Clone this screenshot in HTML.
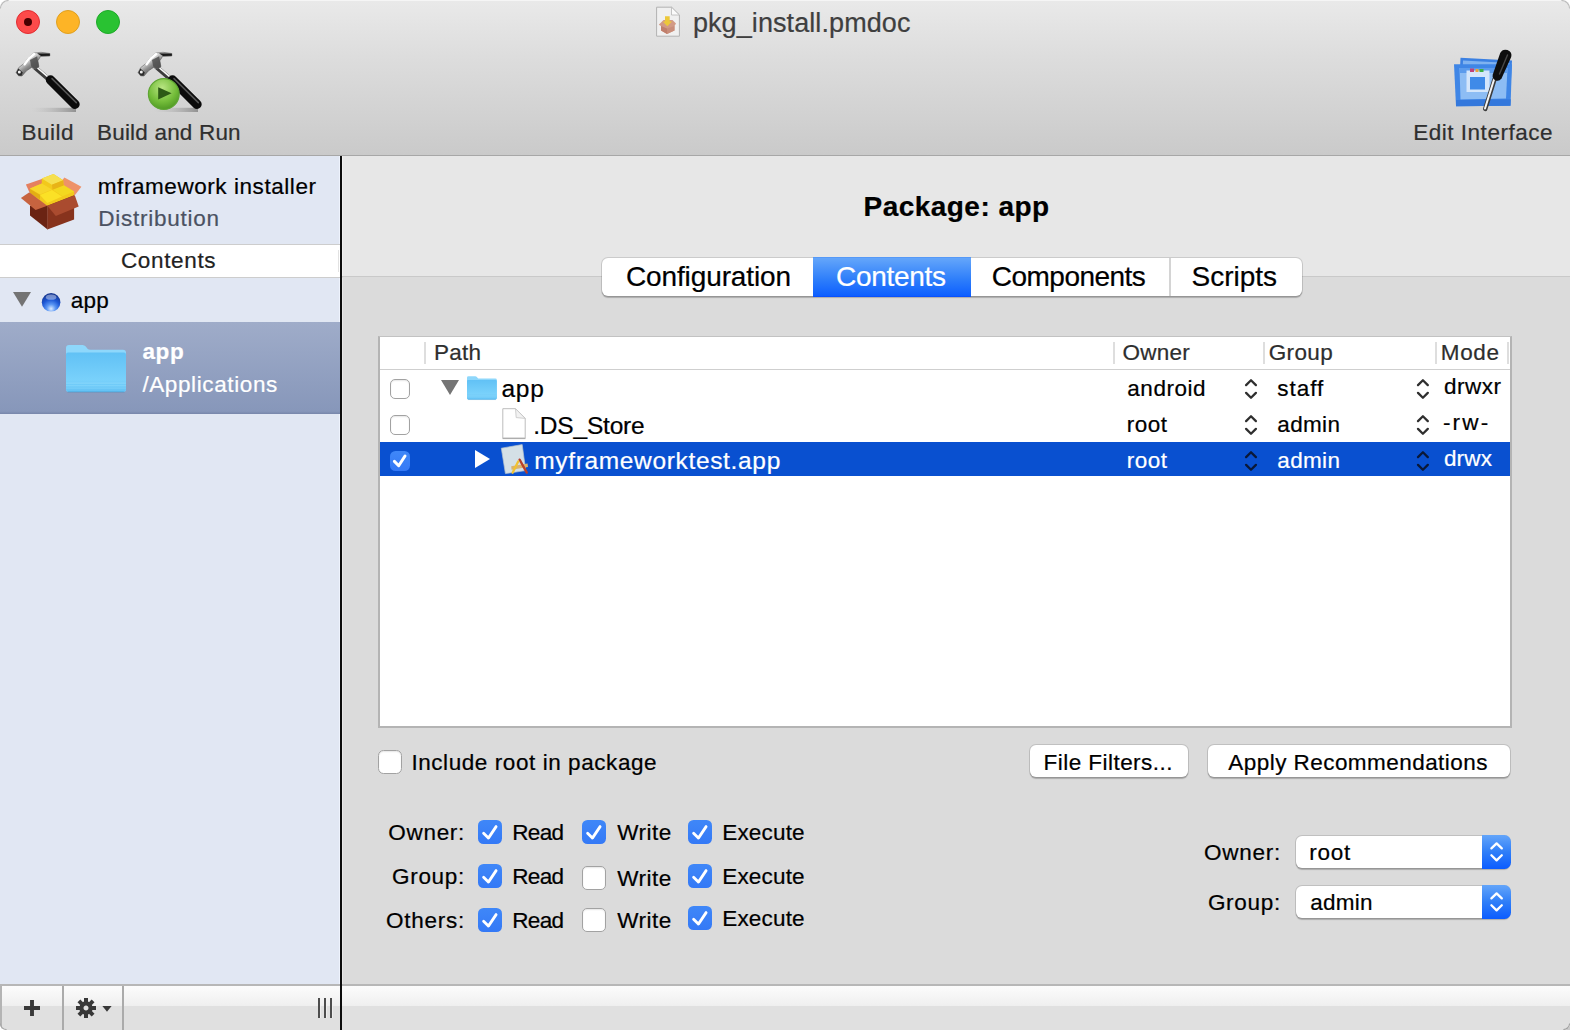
<!DOCTYPE html>
<html><head><meta charset="utf-8"><title>pkg_install.pmdoc</title>
<style>
*{box-sizing:border-box;margin:0;padding:0}
html,body{width:1570px;height:1030px;overflow:hidden;background:#fff}
body{font-family:"Liberation Sans",sans-serif;color:#000;position:relative}
.a{position:absolute}
.t{position:absolute;white-space:nowrap;line-height:1;-webkit-text-stroke:.22px}
#win{position:absolute;left:0;top:0;width:1570px;height:1030px;border-radius:8px 8px 6px 6px;overflow:hidden;background:#dcdcdc}
#toolbar{position:absolute;left:0;top:0;width:1570px;height:156px;background:linear-gradient(#e9e9e9 0,#dcdcdc 60px,#cacaca 154px);border-bottom:1px solid #a7a7a7;border-top:1px solid #f5f5f5}
.tl{position:absolute;top:10px;width:24px;height:24px;border-radius:50%}
#sidebar{position:absolute;left:0;top:156px;width:340px;height:829px;background:#e1e7f3}
#divider{position:absolute;left:340px;top:156px;width:2px;height:874px;background:#0c0c0c}
#main{position:absolute;left:342px;top:156px;width:1228px;height:829px;background:#dbdbdb}
#maintop{position:absolute;left:342px;top:156px;width:1228px;height:121px;background:#e7e7e7;border-bottom:1px solid #c9c9c9}
.cb{position:absolute;border-radius:5px;background:#fff;border:1px solid #a2a2a2;box-shadow:inset 0 1px 1.5px rgba(0,0,0,.1)}
.cbk{position:absolute;border-radius:5.5px;background:linear-gradient(#3f87f8,#3479f6);}
.btn{position:absolute;background:#fff;border-radius:6px;box-shadow:0 0 0 1px rgba(0,0,0,.12),0 1.5px 1px rgba(0,0,0,.22)}
.bbar{position:absolute;top:984px;height:46px;background:linear-gradient(#fcfcfc 0,#efefef 20px,#e0e0e0 20.5px,#e0e0e0 44px);border-top:2px solid #b7b7b7}
.sep{position:absolute;width:2px;background:#dedede;top:342px;height:22px}
</style></head><body>
<div class="a" style="left:1560px;top:1020px;width:10px;height:10px;background:#c8c8c8"></div>
<div id="win">
<div id="toolbar"></div>
<div class="tl" style="left:16px;background:#fc4a4a;border:1px solid #e22c31"></div>
<div class="tl" style="left:56px;background:#fdb426;border:1px solid #e0a01f"></div>
<div class="tl" style="left:96px;background:#29c232;border:1px solid #1eaa29"></div>
<div class="a" style="left:24px;top:18px;width:8px;height:8px;border-radius:50%;background:#470001"></div>

<div id="sidebar"></div>
<div class="a" style="left:339px;top:156px;width:1px;height:828px;background:#eef3fd"></div>
<div class="a" style="left:0;top:244px;width:340px;height:34px;background:#fff;border-top:1px solid #cdcdcd;border-bottom:1px solid #cdcdcd"></div>
<div class="a" id="sel" style="left:0;top:322px;width:340px;height:92px;background:linear-gradient(#9facc9 0,#8797ba 97%,#7786aa 100%)"></div>
<div class="a" style="left:338px;top:250px;width:1px;height:22px;background:#e2e2e2"></div>
<div id="main"></div>
<div id="maintop"></div>

<!-- tabs -->
<div class="btn" style="left:602px;top:258px;width:700px;height:38px;border-radius:6px"></div>
<div class="a" style="left:813px;top:257px;width:158px;height:40px;background:linear-gradient(#4f93f6 0,#63a5fa 1.5px,#2f7ffa 55%,#0e60ff 96%,#0749fb 100%)"></div>
<div class="a" style="left:1169px;top:258px;width:2px;height:38px;background:#d4d4d4"></div>

<!-- table -->
<div class="a" style="left:378px;top:336px;width:1134px;height:392px;background:#fff;border:2px solid #b4b4b4;border-top:1px solid #c2c2c2"></div>
<div class="a" style="left:380px;top:369px;width:1130px;height:1px;background:#cfcfcf"></div>
<div class="sep" style="left:424px"></div>
<div class="sep" style="left:1113px"></div>
<div class="sep" style="left:1263px"></div>
<div class="sep" style="left:1435px"></div>
<div class="sep" style="left:1507px"></div>
<div class="a" style="left:380px;top:442px;width:1130px;height:34px;background:#0950d0"></div>
<div class="cb" style="left:390px;top:379px;width:20px;height:20px"></div>
<div class="cb" style="left:390px;top:415px;width:20px;height:20px"></div>
<div class="cbk" style="left:390px;top:451px;width:20px;height:20px"></div>

<!-- bottom controls -->
<div class="cb" style="left:378px;top:750px;width:24px;height:24px;border-radius:5.5px"></div>
<div class="btn" style="left:1030px;top:745px;width:158px;height:32px"></div>
<div class="btn" style="left:1208px;top:745px;width:302px;height:32px"></div>

<div class="cbk" style="left:478px;top:820px;width:24px;height:24px"></div>
<div class="cbk" style="left:582px;top:820px;width:24px;height:24px"></div>
<div class="cbk" style="left:688px;top:820px;width:24px;height:24px"></div>
<div class="cbk" style="left:478px;top:864px;width:24px;height:24px"></div>
<div class="cb"  style="left:582px;top:866px;width:24px;height:24px"></div>
<div class="cbk" style="left:688px;top:864px;width:24px;height:24px"></div>
<div class="cbk" style="left:478px;top:908px;width:24px;height:24px"></div>
<div class="cb"  style="left:582px;top:908px;width:24px;height:24px"></div>
<div class="cbk" style="left:688px;top:906px;width:24px;height:24px"></div>

<div class="btn" style="left:1296px;top:836px;width:214px;height:32px"></div>
<div class="a" style="left:1482px;top:835px;width:29px;height:34px;border-radius:0 6.5px 6.5px 0;background:linear-gradient(#63a5fa,#2f7ef8 50%,#0b5cff)"></div>
<div class="btn" style="left:1296px;top:886px;width:214px;height:32px"></div>
<div class="a" style="left:1482px;top:885px;width:29px;height:34px;border-radius:0 6.5px 6.5px 0;background:linear-gradient(#63a5fa,#2f7ef8 50%,#0b5cff)"></div>

<!-- bottom bars -->
<div class="bbar" style="left:0;width:340px"></div>
<div class="bbar" style="left:342px;width:1228px"></div>
<div class="a" style="left:62px;top:986px;width:2px;height:44px;background:#ababab"></div>
<div class="a" style="left:122px;top:986px;width:2px;height:44px;background:#ababab"></div>
<div class="a" style="left:0;top:986px;width:2px;height:44px;background:#b4b4b4"></div>
<div class="a" style="left:342px;top:278px;width:1px;height:706px;background:#e8e8e8"></div>
<div class="a" style="left:342px;top:156px;width:1px;height:120px;background:#f0f0f0"></div>
<div id="divider"></div>

<svg class="a" style="left:0;top:0" width="1570" height="1030" viewBox="0 0 1570 1030">
<defs>
 <linearGradient id="hg" x1="0" y1="0" x2="1" y2="1">
  <stop offset="0" stop-color="#ffffff"/><stop offset=".3" stop-color="#ededed"/><stop offset=".48" stop-color="#8c8c8c"/><stop offset=".7" stop-color="#4c4c4c"/><stop offset="1" stop-color="#101010"/>
 </linearGradient>
 <linearGradient id="nk" x1="0" y1="1" x2="1" y2="0">
  <stop offset="0" stop-color="#555"/><stop offset=".5" stop-color="#f4f4f4"/><stop offset="1" stop-color="#777"/>
 </linearGradient>
 <linearGradient id="sh" x1="0" y1="0" x2="1" y2="0">
  <stop offset="0" stop-color="#bdbdbd" stop-opacity="0"/><stop offset=".6" stop-color="#a8a8a8" stop-opacity=".7"/><stop offset="1" stop-color="#8a8a8a" stop-opacity=".9"/>
 </linearGradient>
 <radialGradient id="gp" cx=".45" cy=".3" r=".75">
  <stop offset="0" stop-color="#b9e583"/><stop offset=".6" stop-color="#74bd3a"/><stop offset="1" stop-color="#4a9420"/>
 </radialGradient>
 <radialGradient id="bs" cx=".5" cy=".85" r=".8">
  <stop offset="0" stop-color="#dbeaff"/><stop offset=".3" stop-color="#5a96f3"/><stop offset=".62" stop-color="#1d58d6"/><stop offset="1" stop-color="#16368f"/>
 </radialGradient>
 <linearGradient id="fd" x1="0" y1="0" x2="0" y2="1">
  <stop offset="0" stop-color="#61c1f5"/><stop offset=".7" stop-color="#79d1fb"/><stop offset="1" stop-color="#62c1f4"/>
 </linearGradient>
 <g id="hammer">
  <rect x="32" y="107.8" width="44" height="4.2" fill="url(#sh)"/>
  <line x1="35" y1="67.5" x2="49.5" y2="80" stroke="#3c3c3c" stroke-width="4.6"/>
  <line x1="36" y1="66.6" x2="50" y2="78.6" stroke="#f6f6f6" stroke-width="1.7"/>
  <line x1="50.5" y1="80" x2="75" y2="104.3" stroke="#0b0b0b" stroke-width="9.4" stroke-linecap="round"/>
  <line x1="52" y1="78.6" x2="76.3" y2="102.6" stroke="#555" stroke-width="1.5" stroke-linecap="round"/>
  <path d="M16.1,72.7 L18.6,67.7 L24.8,62.8 L28.2,57.8 L33.9,53 L41,52.3 L49.8,53.5 L49.8,56 L40.6,56.4 L37.9,60.7 L38.9,66.7 L35.2,69.6 L31.5,67.5 L26.5,70.8 L22,76 L18.6,75.8 Z" fill="url(#hg)" stroke="#4a4a4a" stroke-width=".5"/>
  <path d="M30,60 L37.2,56.3 L38.7,66.4 L35,69 L31.2,66.6 Z" fill="#4f4f4f" opacity=".85"/>
  <path d="M37,53.2 L49.8,53.7 L49.8,55.8 L41,56 Z" fill="#191919"/>
  <path d="M24.6,64.2 L29,58.3 L34.2,54" fill="none" stroke="#fff" stroke-width="2.4" stroke-linecap="round"/>
  <path d="M16.3,72.5 L18.4,68.4 L22.8,72.6 L21.4,75.8 L18.6,75.6 Z" fill="#2a2a2a"/>
  <circle cx="19.3" cy="72" r="1.5" fill="#f2f2f2"/>
 </g>
 <g id="fold">
  <path d="M0,3 Q0,0 3,0 L16.5,0 Q18.5,0 19.8,1.6 L21.5,3.7 Q22.5,4.8 24.5,4.8 L57,4.8 Q60,4.8 60,7.8 L60,44 Q60,47 57,47 L3,47 Q0,47 0,44 Z" fill="#8ed7fb"/>
  <path d="M0,9.5 Q0,7.5 2,7.5 L58,7.5 Q60,7.5 60,9.5 L60,44 Q60,47 57,47 L3,47 Q0,47 0,44 Z" fill="url(#fd)"/>
  <path d="M1.5,47 L58.5,47" stroke="#3f8fc4" stroke-width="1" opacity=".55"/>
  <rect x="0" y="37.5" width="60" height="1.3" fill="#8bd9fc" opacity=".7"/>
  <rect x="0" y="40" width="60" height="1.3" fill="#8bd9fc" opacity=".55"/>
  <rect x="0" y="42.5" width="60" height="1.3" fill="#8bd9fc" opacity=".4"/>
 </g>
 <g id="stp" fill="none" stroke-width="2.3" stroke-linecap="round" stroke-linejoin="round">
  <path d="M-4.9,-3.9 L0,-8.7 L4.9,-3.9"/><path d="M-4.9,3.9 L0,8.7 L4.9,3.9"/>
 </g>
 <path id="ck" d="M5.6,13.2 L10.4,18.1 L18.1,6.6" fill="none" stroke="#fff" stroke-width="2.8" stroke-linecap="round" stroke-linejoin="round"/>
</defs>

<!-- toolbar icons -->
<use href="#hammer"/>
<use href="#hammer" transform="translate(122,0)"/>
<circle cx="163.8" cy="94" r="15.4" fill="url(#gp)" stroke="#5fa535" stroke-width="1.2"/>
<path d="M158.2,87.2 L171.6,93.3 L158.2,99.4 Z" fill="#2d5a16"/>

<!-- edit interface -->
<g>
 <path d="M1460.5,57.8 L1512,60.5 L1510,99 L1458.5,97 Z" fill="#3b80e2"/>
 <path d="M1463,60.5 L1509.5,63 L1508,96 L1461.5,94.5 Z" fill="#7fb2f0"/>
 <path d="M1454,64.2 L1512,64.2 L1510.5,105.8 L1456,106.3 Z" fill="#3f86e6"/>
 <path d="M1459.5,68 L1507.5,68 L1506,98.5 L1460.5,99.5 Z" fill="#8dbdf4"/>
 <path d="M1459.5,68 L1507.5,68 L1507.3,73 L1459.7,73 Z" fill="#5b9bec"/>
 <rect x="1466.5" y="70.5" width="23" height="21.5" fill="#d4e6fb"/>
 <rect x="1470" y="77" width="15" height="12.5" fill="#3f8ae8"/>
 <rect x="1470" y="68.5" width="4" height="3.5" fill="#c0417a"/><rect x="1475.5" y="69" width="3" height="3" fill="#e8a33b"/><rect x="1479.5" y="69" width="4" height="3" fill="#3cb043"/>
 <path d="M1456,100 L1510.8,99.2 L1510.5,105.8 L1456,106.3 Z" fill="#3478dc"/>
 <line x1="1494.6" y1="79" x2="1485.2" y2="109" stroke="#3c3c3c" stroke-width="4.4" stroke-linecap="round"/>
 <line x1="1494.2" y1="79" x2="1485" y2="108.5" stroke="#f4f4f4" stroke-width="2" stroke-linecap="round"/>
 <path d="M1500.2,53 Q1502.5,48.5 1507.5,50 Q1512.5,52 1511.2,57 L1501.5,78.5 Q1499,82 1495.3,80.3 Q1491.8,78.3 1492.8,74.5 Z" fill="#0e0e0e"/>
 <line x1="1507.5" y1="55" x2="1499.5" y2="74" stroke="#484848" stroke-width="1.4" stroke-linecap="round"/>
</g>

<!-- package icon -->
<g>
 <path d="M25.9,184.5 L41.8,179 L47.3,186 L29.4,192.2 Z" fill="#e5805f"/>
 <path d="M64.4,177.5 L81.4,186.8 L74.8,195.3 L58,186 Z" fill="#ee9269"/>
 <path d="M30,188.5 L41.8,183.5 L41.8,178.6 L53.5,174 L63.2,180.2 L63.6,185.6 L74.1,191.4 L74.1,196 L47.3,206.5 L30,193 Z" fill="#f2c91c"/>
 <path d="M41.8,178.6 L53.5,174 L63.2,180.2 L51.9,184.8 Z" fill="#f6e050"/>
 <path d="M30,188.5 L41.8,183.5 L52,189.5 L40,194.5 Z" fill="#f7d62a"/>
 <path d="M52.5,189.5 L63.6,185 L74.1,191.4 L62.5,196.2 Z" fill="#f3d81f"/>
 <path d="M40,195 L52,190 L62,196.5 L47.3,203 Z" fill="#fbe126"/>
 <path d="M30,189 L40,194.8 L40,199.5 L30,193 Z" fill="#e3ae14"/>
 <path d="M51.9,184.8 L63.2,180.2 L63.6,185.6 L52.5,189.8 Z" fill="#e8b318"/>
 <path d="M30,205.8 L47.6,205.8 L47.6,229.5 L30,215.5 Z" fill="#6b2313"/>
 <path d="M47.3,205.8 L74.1,195.3 L74.1,219.4 L47.3,229.5 Z" fill="#87331d"/>
 <path d="M20.9,198 L29.4,192.2 L47.3,205.8 L35.6,210.1 Z" fill="#c7633f"/>
 <path d="M47.3,205.8 L74.8,195.3 L78.7,206.6 L55.8,215.9 Z" fill="#aa4b2f"/>
</g>

<!-- title doc icon -->
<g>
 <path d="M656.6,7.2 L671.5,7.2 L679.4,15 L679.4,36.2 L656.6,36.2 Z" fill="#f0f0f0" stroke="#b2b2b2" stroke-width="1"/>
 <path d="M671.5,7.2 L671.5,15 L679.4,15 Z" fill="#fbfbfb" stroke="#b8b8b8" stroke-width=".8"/>
 <path d="M660,23.5 L663.5,20 L672.5,20 L676,23.5 L674.5,26 L674.5,30.5 L667,34 L661,30.5 L661,26 L658.8,24.8 Z" fill="#d29a86"/>
 <path d="M661,26 L667,28.5 L667,34 L661,30.5 Z" fill="#c07f6c"/>
 <path d="M667,28.5 L674.5,26 L674.5,30.5 L667,34 Z" fill="#c98d7a"/>
 <path d="M665,16.3 L669.7,16.3 L669.7,21.5 L672,21.5 L667.3,26.3 L662.7,21.5 L665,21.5 Z" fill="#ecc83a"/>
</g>

<!-- sidebar icons -->
<path d="M13,292 L31,292 L22,306.8 Z" fill="#737373"/>
<circle cx="51.1" cy="302.3" r="9.3" fill="url(#bs)"/>
<ellipse cx="51.1" cy="297.2" rx="5.2" ry="2.6" fill="#fff" opacity=".4"/>
<use href="#fold" transform="translate(66,345)"/>

<!-- table icons -->
<path d="M441,380 L459,380 L450,395 Z" fill="#757575"/>
<use href="#fold" transform="translate(467,376.2) scale(.497)"/>
<path d="M502.8,408.7 L515.5,408.7 L525.2,418.4 L525.2,438 L502.8,438 Z" fill="#fff" stroke="#bdbdbd" stroke-width="1"/>
<path d="M502.5,438.6 L525.5,438.6" stroke="#a8a8a8" stroke-width="1"/>
<path d="M515.5,408.7 L516.2,417.6 L525.2,418.4 Z" fill="#f2f2f2" stroke="#c4c4c4" stroke-width=".8"/>
<path d="M475,450 L490,459 L475,468 Z" fill="#fff"/>
<g>
 <path d="M501.3,448.2 L522.2,444.6 L525.7,470.6 L505.4,473.6 Z" fill="#d4e0e6" stroke="#b4c2cc" stroke-width=".7"/>
 <path d="M511.2,466.2 L527.6,463.6 L528,467 L511.6,469.8 Z" fill="#d9b26d"/>
 <line x1="519.6" y1="459.6" x2="526.8" y2="472.6" stroke="#b7402a" stroke-width="2.3" stroke-linecap="round"/>
 <line x1="518.2" y1="461.4" x2="512.6" y2="472.8" stroke="#f0c232" stroke-width="2.3" stroke-linecap="round"/>
</g>
<use href="#stp" transform="translate(1251,389)" stroke="#2f2f2f"/>
<use href="#stp" transform="translate(1251,425)" stroke="#2f2f2f"/>
<use href="#stp" transform="translate(1251,461)" stroke="#0a1838"/>
<use href="#stp" transform="translate(1422.9,389)" stroke="#2f2f2f"/>
<use href="#stp" transform="translate(1422.9,425)" stroke="#2f2f2f"/>
<use href="#stp" transform="translate(1422.9,461)" stroke="#0a1838"/>

<!-- checks -->
<path d="M394.4,461.4 L398.7,465.7 L405,456" fill="none" stroke="#fff" stroke-width="3" stroke-linecap="round" stroke-linejoin="round"/>
<use href="#ck" transform="translate(478,820)"/>
<use href="#ck" transform="translate(582,820)"/>
<use href="#ck" transform="translate(688,820)"/>
<use href="#ck" transform="translate(478,864)"/>
<use href="#ck" transform="translate(688,864)"/>
<use href="#ck" transform="translate(478,908)"/>
<use href="#ck" transform="translate(688,906)"/>

<!-- popup chevrons -->
<g fill="none" stroke="#fff" stroke-width="2.3" stroke-linecap="round" stroke-linejoin="round">
 <path d="M1491.4,848.4 L1496.6,843.4 L1501.8,848.4"/><path d="M1491.4,855.2 L1496.6,860.4 L1501.8,855.2"/>
 <path d="M1491.4,898.4 L1496.6,893.4 L1501.8,898.4"/><path d="M1491.4,905.2 L1496.6,910.4 L1501.8,905.2"/>
</g>

<!-- bottom bar icons -->
<path d="M24,1008 L40,1008 M32,1000 L32,1016" stroke="#393939" stroke-width="3.9" fill="none"/>
<g transform="translate(86,1008)">
 <circle r="4.6" fill="none" stroke="#383838" stroke-width="4.2"/>
 <g stroke="#383838" stroke-width="4">
  <line x1="0" y1="-10" x2="0" y2="-6"/><line x1="0" y1="10" x2="0" y2="6"/>
  <line x1="-10" y1="0" x2="-6" y2="0"/><line x1="10" y1="0" x2="6" y2="0"/>
  <line x1="-7.07" y1="-7.07" x2="-4.2" y2="-4.2"/><line x1="7.07" y1="7.07" x2="4.2" y2="4.2"/>
  <line x1="-7.07" y1="7.07" x2="-4.2" y2="4.2"/><line x1="7.07" y1="-7.07" x2="4.2" y2="-4.2"/>
 </g>
</g>
<path d="M102.4,1006 L111.6,1006 L107,1011.7 Z" fill="#383838"/>
<path d="M320,998 L320,1018 M326,998 L326,1018 M332,998 L332,1018" stroke="#f3f3f3" stroke-width="1.4" fill="none"/>
<path d="M319,998 L319,1018 M325,998 L325,1018 M331,998 L331,1018" stroke="#4d4d4d" stroke-width="2" fill="none"/>
<!-- window corner arcs -->
<g fill="none" stroke="#bdbdbd" stroke-width="1.2">
 <path d="M0.4,8.6 A8.2,8.2 0 0 1 8.6,0.4"/>
 <path d="M1561.4,0.4 A8.2,8.2 0 0 1 1569.6,8.6"/>
 <path d="M0.4,1023.5 A6.2,6.2 0 0 0 6.6,1029.6" stroke="#a8a8a8"/>
 <path d="M1563.4,1029.6 A6.2,6.2 0 0 0 1569.6,1023.4" stroke="#a0a0a0"/>
</g>

</svg>
<div class="t" id="title" style="left:692.9px;top:10.0px;font-size:27px;letter-spacing:0.09px;color:#3f3f3f">pkg_install.pmdoc</div>
<div class="t" id="tb1" style="left:21.4px;top:122.0px;font-size:22.5px;letter-spacing:0.50px;color:#2f2f2f">Build</div>
<div class="t" id="tb2" style="left:97.0px;top:122.0px;font-size:22.5px;letter-spacing:0.19px;color:#2f2f2f">Build and Run</div>
<div class="t" id="tb3" style="left:1413.2px;top:122.0px;font-size:22.5px;letter-spacing:0.52px;color:#2f2f2f">Edit Interface</div>
<div class="t" id="sb1" style="left:97.8px;top:176.0px;font-size:22.5px;letter-spacing:0.56px;color:#000">mframework installer</div>
<div class="t" id="sb2" style="left:98.2px;top:208.0px;font-size:22.5px;letter-spacing:0.75px;color:#4b5262">Distribution</div>
<div class="t" id="sb3" style="left:120.9px;top:250.0px;font-size:22.5px;letter-spacing:0.66px;color:#222">Contents</div>
<div class="t" id="sb4" style="left:70.7px;top:290.0px;font-size:22.5px;letter-spacing:0.24px;color:#000">app</div>
<div class="t" id="sb5" style="left:142.4px;top:341.0px;font-size:22.5px;letter-spacing:0.62px;color:#fff;font-weight:bold">app</div>
<div class="t" id="sb6" style="left:142.4px;top:374.0px;font-size:22.5px;letter-spacing:0.61px;color:#ffffff">/Applications</div>
<div class="t" id="pk" style="left:863.6px;top:193.0px;font-size:28px;letter-spacing:0.45px;color:#000;font-weight:bold">Package: app</div>
<div class="t" id="tab1" style="left:625.9px;top:263.0px;font-size:28px;letter-spacing:-0.11px;color:#000">Configuration</div>
<div class="t" id="tab2" style="left:836.1px;top:263.0px;font-size:28px;letter-spacing:-0.32px;color:#fff">Contents</div>
<div class="t" id="tab3" style="left:991.8px;top:263.0px;font-size:28px;letter-spacing:-0.52px;color:#000">Components</div>
<div class="t" id="tab4" style="left:1191.5px;top:263.0px;font-size:28px;letter-spacing:0.00px;color:#000">Scripts</div>
<div class="t" id="h1" style="left:434.0px;top:342.0px;font-size:22.5px;letter-spacing:0.24px;color:#2e2e2e">Path</div>
<div class="t" id="h2" style="left:1122.5px;top:342.0px;font-size:22.5px;letter-spacing:0.23px;color:#2e2e2e">Owner</div>
<div class="t" id="h3" style="left:1268.7px;top:342.0px;font-size:22.5px;letter-spacing:0.37px;color:#2e2e2e">Group</div>
<div class="t" id="h4" style="left:1440.8px;top:342.0px;font-size:22.5px;letter-spacing:0.64px;color:#2e2e2e">Mode</div>
<div class="t" id="r1a" style="left:501.4px;top:377.0px;font-size:24.5px;letter-spacing:0.77px;color:#000">app</div>
<div class="t" id="r2a" style="left:533.2px;top:414.0px;font-size:24.5px;letter-spacing:-0.19px;color:#000">.DS_Store</div>
<div class="t" id="r3a" style="left:534.2px;top:449.0px;font-size:24.5px;letter-spacing:0.66px;color:#fff">myframeworktest.app</div>
<div class="t" id="r1b" style="left:1127.3px;top:378.0px;font-size:22.5px;letter-spacing:0.54px;color:#000">android</div>
<div class="t" id="r2b" style="left:1126.7px;top:414.0px;font-size:22.5px;letter-spacing:0.53px;color:#000">root</div>
<div class="t" id="r3b" style="left:1126.7px;top:450.0px;font-size:22.5px;letter-spacing:0.53px;color:#fff">root</div>
<div class="t" id="r1c" style="left:1277.3px;top:378.0px;font-size:22.5px;letter-spacing:0.96px;color:#000">staff</div>
<div class="t" id="r2c" style="left:1277.3px;top:414.0px;font-size:22.5px;letter-spacing:0.33px;color:#000">admin</div>
<div class="t" id="r3c" style="left:1277.3px;top:450.0px;font-size:22.5px;letter-spacing:0.33px;color:#fff">admin</div>
<div class="t" id="r1d" style="left:1443.9px;top:376.0px;font-size:22.5px;letter-spacing:0.55px;color:#000">drwxr</div>
<div class="t" id="r2d" style="left:1442.9px;top:412.0px;font-size:22.5px;letter-spacing:2.19px;color:#000">-rw-</div>
<div class="t" id="r3d" style="left:1443.9px;top:448.0px;font-size:22.5px;letter-spacing:0.22px;color:#fff">drwx</div>
<div class="t" id="inc" style="left:411.4px;top:752.0px;font-size:22.5px;letter-spacing:0.57px;color:#000">Include root in package</div>
<div class="t" id="bt1" style="left:1043.6px;top:752.0px;font-size:22.5px;letter-spacing:0.45px;color:#000">File Filters...</div>
<div class="t" id="bt2" style="left:1228.3px;top:752.0px;font-size:22.5px;letter-spacing:0.45px;color:#000">Apply Recommendations</div>
<div class="t" id="po" style="left:388.3px;top:822.0px;font-size:22.5px;letter-spacing:0.69px;color:#000">Owner:</div>
<div class="t" id="pg" style="left:392.1px;top:866.0px;font-size:22.5px;letter-spacing:0.67px;color:#000">Group:</div>
<div class="t" id="pt" style="left:386.0px;top:910.0px;font-size:22.5px;letter-spacing:0.75px;color:#000">Others:</div>
<div class="t" id="rd1" style="left:512.2px;top:822.0px;font-size:22.5px;letter-spacing:-0.63px;color:#000">Read</div>
<div class="t" id="rd2" style="left:512.2px;top:866.0px;font-size:22.5px;letter-spacing:-0.63px;color:#000">Read</div>
<div class="t" id="rd3" style="left:512.2px;top:910.0px;font-size:22.5px;letter-spacing:-0.63px;color:#000">Read</div>
<div class="t" id="wr1" style="left:617.2px;top:822.0px;font-size:22.5px;letter-spacing:0.51px;color:#000">Write</div>
<div class="t" id="wr2" style="left:617.2px;top:868.0px;font-size:22.5px;letter-spacing:0.51px;color:#000">Write</div>
<div class="t" id="wr3" style="left:617.2px;top:910.0px;font-size:22.5px;letter-spacing:0.51px;color:#000">Write</div>
<div class="t" id="ex1" style="left:722.2px;top:822.0px;font-size:22.5px;letter-spacing:0.19px;color:#000">Execute</div>
<div class="t" id="ex2" style="left:722.2px;top:866.0px;font-size:22.5px;letter-spacing:0.19px;color:#000">Execute</div>
<div class="t" id="ex3" style="left:722.2px;top:908.0px;font-size:22.5px;letter-spacing:0.19px;color:#000">Execute</div>
<div class="t" id="lo" style="left:1204.0px;top:842.0px;font-size:22.5px;letter-spacing:0.77px;color:#000">Owner:</div>
<div class="t" id="lg" style="left:1207.9px;top:892.0px;font-size:22.5px;letter-spacing:0.73px;color:#000">Group:</div>
<div class="t" id="vo" style="left:1309.3px;top:842.0px;font-size:22.5px;letter-spacing:0.73px;color:#000">root</div>
<div class="t" id="vg" style="left:1310.3px;top:892.0px;font-size:22.5px;letter-spacing:0.23px;color:#000">admin</div>
</div>
</body></html>
